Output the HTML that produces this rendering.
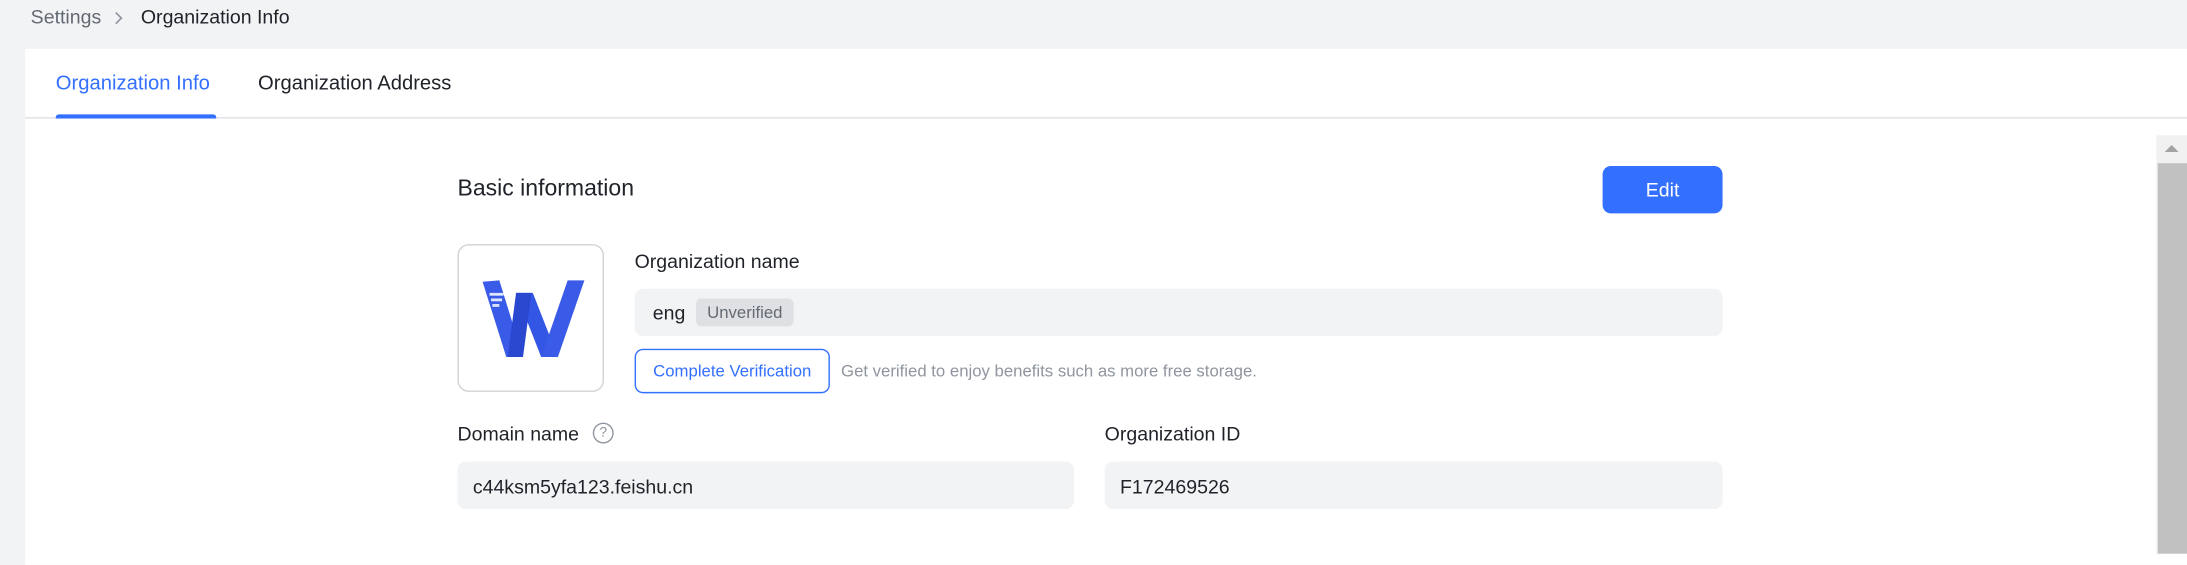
<!DOCTYPE html>
<html><head><meta charset="utf-8"><style>
html,body{margin:0;padding:0;width:2187px;height:542px;overflow:hidden;background:#f2f3f5;font-family:"Liberation Sans","Noto Sans CJK SC",sans-serif;}
#s{position:absolute;left:0;top:0;width:1568px;height:389px;transform:scale(1.39477);transform-origin:0 0;}
.a{position:absolute;white-space:nowrap;}
.card{position:absolute;left:18px;top:35px;width:1550px;height:370px;background:#fff;}
.inp{position:absolute;background:#f2f3f5;border-radius:6px;}
</style></head><body><div id="s">
<div class="a" style="left:22px;top:4px;font-size:14px;color:#646a73;">Settings</div>
<svg class="a" style="left:81px;top:7px" width="8" height="12" viewBox="0 0 8 12"><path d="M2 2l4 4-4 4" fill="none" stroke="#8f959e" stroke-width="1.2"/></svg>
<div class="a" style="left:101px;top:4px;font-size:14px;color:#1f2329;">Organization Info</div>
<div class="card"></div>
<div class="a" style="left:40px;top:52px;font-size:14.5px;color:#3370ff;">Organization Info</div>
<div class="a" style="left:185px;top:52px;font-size:14.5px;color:#1f2329;">Organization Address</div>
<div class="a" style="left:18px;top:84px;width:1550px;height:1px;background:#dee0e3;"></div>
<div class="a" style="left:40px;top:82px;width:115px;height:3px;background:#3370ff;border-radius:2px 2px 0 0;"></div>
<div class="a" style="left:328px;top:126px;font-size:16.5px;color:#1f2329;">Basic information</div>
<div class="a" style="left:1149px;top:119px;width:86px;height:34px;background:#3370ff;border-radius:6px;color:#fff;font-size:14px;text-align:center;line-height:34px;">Edit</div>
<div class="a" style="left:328px;top:175px;width:105px;height:106px;border:1px solid #d0d3d6;border-radius:8px;box-sizing:border-box;">
<svg width="104" height="105" viewBox="0 0 104 105">
<polygon points="17,26 29,25 46,80 34,80" fill="#3a5ae8"/>
<polygon points="41,34 53,34 71,80 59,80" fill="#3456e4"/>
<polygon points="35,80 41,34 52,34 46,80" fill="#2a47d0"/>
<polygon points="59,80 78,25 90,25 71,80" fill="#3a5ae8"/>
<rect x="22" y="34" width="10" height="2" fill="#dfe6ff"/><rect x="23" y="38" width="8" height="2" fill="#dfe6ff"/><rect x="24" y="42" width="5" height="2" fill="#dfe6ff"/>
</svg></div>
<div class="a" style="left:455px;top:179px;font-size:14px;color:#1f2329;">Organization name</div>
<div class="inp" style="left:455px;top:207px;width:780px;height:34px;"></div>
<div class="a" style="left:468px;top:216px;font-size:14px;color:#1f2329;">eng</div>
<div class="a" style="left:499px;top:214px;width:70px;height:20px;background:#dee0e3;border-radius:4px;font-size:12px;color:#646a73;text-align:center;line-height:20px;">Unverified</div>
<div class="a" style="left:455px;top:250px;width:140px;height:32px;border:1px solid #3370ff;border-radius:6px;box-sizing:border-box;font-size:12px;color:#3370ff;text-align:center;line-height:30px;">Complete Verification</div>
<div class="a" style="left:603px;top:259px;font-size:12px;color:#8f959e;">Get verified to enjoy benefits such as more free storage.</div>
<div class="a" style="left:328px;top:303px;font-size:14px;color:#1f2329;">Domain name</div>
<div class="a" style="left:425px;top:303px;width:13px;height:13px;border:1px solid #8f959e;border-radius:50%;font-size:10px;color:#8f959e;text-align:center;line-height:13px;">?</div>
<div class="a" style="left:792px;top:303px;font-size:14px;color:#1f2329;">Organization ID</div>
<div class="inp" style="left:328px;top:331px;width:442px;height:34px;"></div>
<div class="a" style="left:339px;top:341px;font-size:14px;color:#1f2329;">c44ksm5yfa123.feishu.cn</div>
<div class="inp" style="left:792px;top:331px;width:443px;height:34px;"></div>
<div class="a" style="left:803px;top:341px;font-size:14px;color:#1f2329;">F172469526</div>
<div class="a" style="left:1546px;top:97px;width:22px;height:300px;background:#f1f1f1;"></div>
<div class="a" style="left:1547px;top:117px;width:21px;height:280px;background:#c1c1c1;"></div>
<svg class="a" style="left:1551px;top:101px" width="12" height="10" viewBox="0 0 12 10"><polygon points="1,8 6,3 11,8" fill="#a3a3a3"/></svg>
</div></body></html>
